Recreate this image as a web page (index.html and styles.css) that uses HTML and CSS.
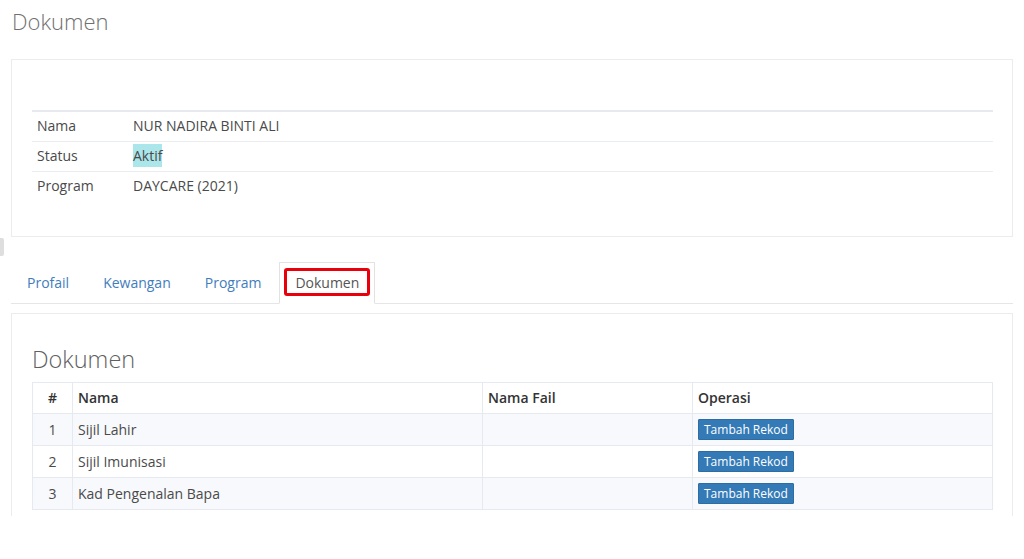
FILE: index.html
```html
<!DOCTYPE html>
<html lang="ms">
<head>
  <meta charset="UTF-8">
  <meta name="viewport" content="width=device-width, initial-scale=1.0">
  <title>Dokumen</title>
  <link rel="stylesheet" href="styles.css">
</head>
<body>

<div class="edge-handle"></div>

<div class="page">
  <h1 class="page-title">Dokumen</h1>

  <!-- maklumat pelajar -->
  <div class="card card-info">
    <table class="info-table">
      <tr>
        <td class="label">Nama</td>
        <td>NUR NADIRA BINTI ALI</td>
      </tr>
      <tr>
        <td class="label">Status</td>
        <td><span class="status">Aktif</span></td>
      </tr>
      <tr>
        <td class="label">Program</td>
        <td>DAYCARE (2021)</td>
      </tr>
    </table>
  </div>

  <ul class="tabs">
    <li><a href="#">Profail</a></li>
    <li><a href="#">Kewangan</a></li>
    <li><a href="#">Program</a></li>
    <li class="active"><a href="#"><span class="marked">Dokumen</span></a></li>
  </ul>

  <!-- senarai dokumen -->
  <div class="card card-docs">
    <h2 class="section-title">Dokumen</h2>
    <table class="doc-table">
      <thead>
        <tr>
          <th class="col-no">#</th>
          <th class="col-name">Nama</th>
          <th class="col-file">Nama Fail</th>
          <th class="col-op">Operasi</th>
        </tr>
      </thead>
      <tbody>
        <tr>
          <td class="col-no">1</td>
          <td>Sijil Lahir</td>
          <td></td>
          <td><button class="btn">Tambah Rekod</button></td>
        </tr>
        <tr>
          <td class="col-no">2</td>
          <td>Sijil Imunisasi</td>
          <td></td>
          <td><button class="btn">Tambah Rekod</button></td>
        </tr>
        <tr>
          <td class="col-no">3</td>
          <td>Kad Pengenalan Bapa</td>
          <td></td>
          <td><button class="btn">Tambah Rekod</button></td>
        </tr>
      </tbody>
    </table>
  </div>
</div>

</body>
</html>
```

FILE: styles.css
```css
body {
  margin: 0;
  font-family: "Open Sans", "Liberation Sans", sans-serif;
  font-size: 14px;
  line-height: 20px;
  color: #555;
  background: #fff;
}
.page {
  padding: 0 11px;
}
.edge-handle {
  position: absolute;
  left: 0;
  top: 238px;
  width: 4px;
  height: 18px;
  background: #dedede;
  border-radius: 0 2px 2px 0;
}
.page-title {
  margin: 8px 0 0 1px;
  font-size: 22px;
  line-height: 26px;
  font-weight: 300;
  color: #707070;
}
.card {
  border: 1px solid #ececec;
  background: #fff;
}
.card-info {
  margin-top: 25px;
  padding: 50px 19px 35px 20px;
}
.info-table {
  width: 100%;
  border-collapse: collapse;
}
.info-table td {
  padding: 4px 5px 5px;
  border-top: 1px solid #e9edf1;
  color: #4a4a4a;
}
.info-table tr:first-child td {
  border-top: 2px solid #e6eaef;
}
.info-table .label {
  width: 86px;
}
.status {
  background: #abe6eb;
  padding: 2px 0;
}
.tabs {
  list-style: none;
  margin: 25px 0 0;
  padding: 0;
  display: flex;
  border-bottom: 1px solid #e6e6e6;
}
.tabs li {
  margin: 0 2px -1px 0;
}
.tabs a {
  display: block;
  padding: 10px 15px;
  border: 1px solid transparent;
  color: #3f7dbd;
  text-decoration: none;
}
.tabs .active a {
  color: #555;
  border-color: #e2e2e2 #e2e2e2 #fff;
  background: #fff;
}
.marked {
  position: relative;
}
.marked::after {
  content: "";
  position: absolute;
  top: -5px;
  bottom: -4px;
  left: -11px;
  right: -11px;
  border: 3px solid #e8000b;
  border-radius: 3px;
}
.card-docs {
  margin-top: 9px;
  padding: 31px 19px 6px 20px;
  border-bottom: 0;
}
.section-title {
  margin: 0 0 9px;
  font-size: 23.5px;
  line-height: 28px;
  font-weight: 300;
  color: #606060;
}
.doc-table {
  width: 100%;
  border-collapse: collapse;
  table-layout: fixed;
  border: 1px solid #e6eaf0;
}
.doc-table th,
.doc-table td {
  border: 1px solid #e6eaf0;
  padding: 5px 5px;
  text-align: left;
  vertical-align: middle;
}
.doc-table th {
  font-weight: 600;
  color: #333;
}
.doc-table td {
  color: #4a4a4a;
}
.doc-table .col-no {
  width: 29px;
  text-align: center;
}
.doc-table .col-name {
  width: 399px;
}
.doc-table .col-file {
  width: 199px;
}
.doc-table tbody tr:nth-child(odd) {
  background: #f8f9fc;
}
.btn {
  font-family: "Open Sans", "Liberation Sans", sans-serif;
  font-size: 12px;
  line-height: 17px;
  padding: 1px 5px;
  border: 1px solid #2e6da4;
  border-radius: 1px;
  background: #337ab7;
  color: #fff;
  cursor: pointer;
  display: block;
}
```
